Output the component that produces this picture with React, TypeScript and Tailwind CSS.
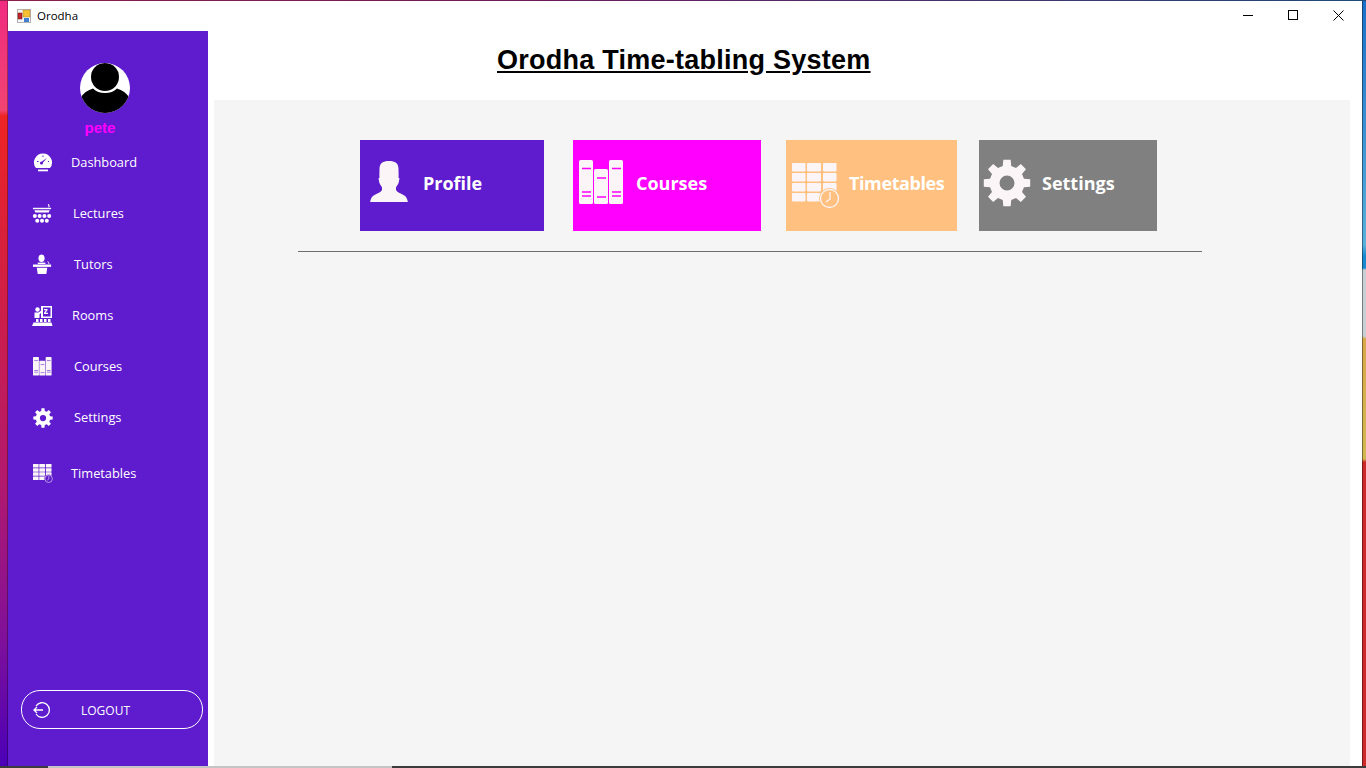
import React from "react";

const WHITE = "#fbf5f7";
const PURPLE = "#5f1bce";

// 8 tooth gear outline, same path for the small and the big one
const gearPath = (() => {
  const pts: string[] = [];
  for (let i = 0; i < 8; i++) {
    const a = (i * Math.PI) / 4 - Math.PI / 2;
    const at = (r: number, d: number) => {
      const t = a + (d * Math.PI) / 180;
      return `${(24 + r * Math.cos(t)).toFixed(2)} ${(24 + r * Math.sin(t)).toFixed(2)}`;
    };
    pts.push(at(17.5, -14), at(23.5, -9), at(23.5, 9), at(17.5, 14));
  }
  return `M${pts.join("L")}zM24 16.5a7.5 7.5 0 1 0 0 15a7.5 7.5 0 0 0 0-15z`;
})();

// --- SVG Icons ---
const DashboardIcon = () => (
  <svg width="20" height="20" viewBox="0 0 20 20" fill="#fff">
    <path d="M10 0.5a9 9 0 0 0-7 14.6h14A9 9 0 0 0 10 0.5z" />
    <path d="M5 16.5h10v1.8H5z" />
    <path d="M14 5 9.5 8 7.5 10.500l2.600-1z" fill={PURPLE} />
    <circle cx="8.5" cy="10" r="1.6" fill={PURPLE} />
    <path d="M4 8.500h1.500M10 2.500V4M15 8.500h1" stroke={PURPLE} strokeWidth="1" />
  </svg>
);

const LecturesIcon = () => (
  <svg width="22" height="21" viewBox="0 0 22 21" fill="#fff">
    <path d="M1 4.500h19v1.500H1z" />
    <path d="M2.500 7h16l-1 2.500h-14z" />
    <path d="M17 4c.5-1 .2-2-.5-3l1-.5c1 1.200 1.200 2.500.6 3.500z" />
    <circle cx="3" cy="13" r="2.100" /><circle cx="8" cy="13" r="2.100" /><circle cx="13" cy="13" r="2.100" /><circle cx="18" cy="13" r="2.100" />
    <circle cx="5.500" cy="18" r="2.100" /><circle cx="10.500" cy="18" r="2.100" /><circle cx="15.500" cy="18" r="2.100" />
  </svg>
);

const TutorsIcon = () => (
  <svg width="22" height="21" viewBox="0 0 22 21" fill="#fff">
    <ellipse cx="10" cy="4" rx="3.200" ry="4" />
    <path d="M6 8.500h8v1.500H6z" />
    <path d="M1 10.500h19V13H1z" />
    <path d="M5 14h11l-1 6.500H6z" />
    <path d="M16 7l1 .3 1.500 2.700h-1z" />
  </svg>
);

const RoomsIcon = () => (
  <svg width="21" height="20" viewBox="0 0 21 20">
    <path d="M9 0h11v12H9z" fill="#fff" />
    <path d="M11 1.500h7.500v9H11z" fill={PURPLE} />
    <path d="M12 3h3.500v1.200l-2 2.500h2.500v1.300h-4V6.700l2-2.400H12z" fill="#fff" />
    <circle cx="5.500" cy="3.500" r="2.200" fill="#fff" />
    <path d="M2.500 6.500h4l3-2 .8 1L7.500 8.500V12h-5z" fill="#fff" />
    <path d="M4 13h2.500v3H4zM8 13h2.500v3H8zM12 13h2.500v3H12zM16 13h2.500v3H16zM1.500 16.500h18l1 3.500H0z" fill="#fff" />
  </svg>
);

const BooksIcon = ({ size, bg }: { size: number; bg: string }) => (
  <svg width={size} height={size} viewBox="0 0 45 45">
    <rect x="0" y="0" width="14" height="44" rx="1.500" fill={WHITE} />
    <rect x="15" y="9" width="14" height="35" rx="1.500" fill={WHITE} />
    <rect x="30" y="0" width="14" height="44" rx="1.500" fill={WHITE} />
    <path d="M3 8.500h9M3 32h9M3 36h9M18 18h9M18 37h9M33 8.500h9M33 32h9M33 36h9" stroke={bg} strokeWidth="1.300" />
  </svg>
);

const TableIcon = ({ size, bg }: { size: number; bg: string }) => (
  <svg width={size} height={size} viewBox="0 0 48 48">
    {[0, 10, 20, 30].map((y) =>
      [
        [0, 13.5],
        [15, 14],
        [31, 13.5],
      ].map(([x, w]) => <rect key={`${x}-${y}`} x={x} y={y} width={w} height="8.400" rx="0.800" fill={WHITE} />),
    )}
    <circle cx="37.500" cy="35.500" r="10.500" fill={bg} />
    <circle cx="37.500" cy="35.500" r="9" fill="none" stroke={WHITE} strokeWidth="1.300" />
    <path d="M38 29v7l-4 3" fill="none" stroke={WHITE} strokeWidth="1.300" />
  </svg>
);

const GearIcon = ({ size, fill = WHITE }: { size: number; fill?: string }) => (
  <svg width={size} height={size} viewBox="0 0 48 48">
    <path fill={fill} fillRule="evenodd" d={gearPath} />
  </svg>
);

const ProfileIcon = () => (
  <svg width="38" height="41" viewBox="0 0 38 41" fill={WHITE}>
    <path d="M19 0c6 0 9.500 2 9.500 8 0 3 .3 6 0 8.500l1 1-.8 4c-.7 2-2 3.500-2.700 5v2.500c1 2 4.500 3.500 7.500 5 2.500 1.200 3.800 3.500 4.500 7.500H0c.7-4 2-6.300 4.500-7.500 3-1.500 6.500-3 7.500-5V26.500c-.7-1.500-2-3-2.700-5l-.8-4 1-1c-.3-2.500 0-5.500 0-8.500C9.500 2 13 0 19 0z" />
  </svg>
);

const LogoutIcon = () => (
  <svg width="18" height="18" viewBox="0 0 18 18" fill="none" stroke="#fff" strokeWidth="1.300">
    <path d="M3 5a7.300 7.300 0 1 1 0 8" />
    <path d="M1 9h9M4 6 1 9l3 3" />
  </svg>
);

const AppIcon = () => (
  <svg width="14" height="14" viewBox="0 0 14 14">
    <rect x="0.500" y="0.500" width="13" height="13" fill="#f4f4f4" stroke="#b4b4b4" />
    <rect x="6" y="1" width="7" height="7" fill="#f5c033" stroke="#b08a20" strokeWidth="0.500" />
    <rect x="1" y="4" width="4" height="6" fill="#c0272d" stroke="#7a1416" strokeWidth="0.500" />
    <rect x="7" y="9" width="5" height="4" fill="#3f7fd0" />
  </svg>
);

const Avatar = () => (
  <svg width="50" height="50" viewBox="0 0 50 50">
    <clipPath id="avatar-clip"><circle cx="25" cy="25" r="25" /></clipPath>
    <g clipPath="url(#avatar-clip)">
      <rect width="50" height="50" fill="#fff" />
      <path d="M0 50V36C3 30 8 27 13 25.500c3 3 7 4.500 12 4.500s9-1.500 12-4.500c5 1.500 10 4.500 13 10.500v14z" fill="#000" />
      <circle cx="25" cy="14" r="14" fill="#000" />
    </g>
  </svg>
);

const navItems = [
  { label: "Dashboard", icon: <DashboardIcon />, ml: "ml-[18px]" },
  { label: "Lectures", icon: <LecturesIcon />, ml: "ml-[20px]" },
  { label: "Tutors", icon: <TutorsIcon />, ml: "ml-[21px]" },
  { label: "Rooms", icon: <RoomsIcon />, ml: "ml-[19px]" },
  { label: "Courses", icon: <BooksIcon size={19} bg={PURPLE} />, ml: "ml-[21px]" },
  { label: "Settings", icon: <GearIcon size={20} fill="#fff" />, ml: "ml-[21px]" },
];

const cards = [
  { label: "Profile", bg: "bg-[#5f1bce]", w: "w-[184px]", ml: "ml-0", gap: "ml-[15px]", iconTop: "mt-[21px]", icon: <ProfileIcon />, pad: "pl-[10px]", track: "" },
  { label: "Courses", bg: "bg-[#ff00ff]", w: "w-[188px]", ml: "ml-[29px]", gap: "ml-[12px]", iconTop: "mt-[20px]", icon: <BooksIcon size={45} bg="#ff00ff" />, pad: "pl-[6px]", track: "" },
  { label: "Timetables", bg: "bg-[#ffc080]", w: "w-[171px]", ml: "ml-[25px]", gap: "ml-[9px]", iconTop: "mt-[23px]", icon: <TableIcon size={48} bg="#ffc080" />, pad: "pl-[6px]", track: "tracking-[-0.4px]" },
  { label: "Settings", bg: "bg-[#808080]", w: "w-[178px]", ml: "ml-[22px]", gap: "ml-[11px]", iconTop: "mt-[19px]", icon: <GearIcon size={48} />, pad: "pl-[4px]", track: "" },
];

export default function App() {
  return (
    <div className="relative w-[1366px] h-[768px] overflow-hidden font-['Open_Sans','Noto_Sans',sans-serif] bg-[linear-gradient(180deg,#f02a80_0%,#f04472_110px,#ee2424_116px,#d8203c_245px,#b01870_490px,#80109a_637px,#4a00b8_768px)]">
      {/* right wallpaper strip */}
      <div className="absolute top-0 right-0 bottom-0 w-[4px] bg-[linear-gradient(180deg,#1a70c8_0px,#58b0dc_245px,#1a8ad0_256px,#1a8ad0_268px,#c8d0d4_270px,#c8d0d4_336px,#d8a848_339px,#d0b850_459px,#cc2a2a_462px,#cc2a2a_768px)]" />
      {/* window shadow edges */}
      <div className="absolute top-0 bottom-0 left-[7px] w-px bg-black/30" />
      <div className="absolute top-0 bottom-0 right-[3px] w-px bg-black/40" />
      {/* top edge */}
      <div className="absolute top-0 left-0 right-0 h-px bg-[linear-gradient(90deg,#8c1f4a_0%,#6a1a5c_40%,#1f4a7a_100%)]" />
      {/* taskbar strip */}
      <div className="absolute bottom-0 left-0 right-0 h-[2px] bg-[#3c3c3c] flex">
        <div className="ml-[48px] w-[344px] bg-[#c4c4c4]" />
      </div>

      <div className="relative flex flex-col ml-[8px] mr-[4px] mt-px h-[765px] bg-white">
        {/* Title bar */}
        <div className="flex items-center h-[30px] shrink-0">
          <div className="ml-[9px] mb-[1px]"><AppIcon /></div>
          <span className="ml-[6px] text-[11.5px] text-black">Orodha</span>
          <div className="ml-auto flex items-center mb-[2px]">
            <div className="w-[10px] h-px bg-black mr-[35px]" />
            <div className="w-[10px] h-[10px] border border-black mr-[35px]" />
            <svg width="11" height="11" viewBox="0 0 11 11" className="mr-[18px]" stroke="#000" strokeWidth="1">
              <path d="M.5.5l10 10M10.500.5l-10 10" />
            </svg>
          </div>
        </div>

        <div className="flex flex-1 min-h-0">
          {/* Sidebar */}
          <aside className="w-[200px] shrink-0 bg-[#5f1bce] flex flex-col">
            <div className="flex flex-col items-center pt-[32px]">
              <div className="ml-[-6px] h-[50px]"><Avatar /></div>
              <span className="ml-[-16px] mt-[7px] h-[16px] leading-[16px] text-[15px] font-bold text-[#ff00ff] font-['Liberation_Sans',sans-serif]">pete</span>
            </div>
            <nav className="flex flex-col mt-[1px]">
              {navItems.map((item) => (
                <div key={item.label} className="flex items-center h-[51px] pl-[24px]">
                  <div className="w-[21px] flex justify-center">{item.icon}</div>
                  <span className={`${item.ml} text-[12.8px] text-white`}>{item.label}</span>
                </div>
              ))}
              <div className="flex items-center h-[51px] mt-[5px] pl-[24px]">
                <div className="w-[21px] flex justify-center"><TableIcon size={20} bg={PURPLE} /></div>
                <span className="ml-[18px] text-[12.8px] text-white">Timetables</span>
              </div>
            </nav>
            <div className="mt-auto mb-[37px] ml-[13px] w-[182px] h-[39px] rounded-[19px] border border-white flex items-center pl-[11px]">
              <LogoutIcon />
              <span className="ml-[30px] mt-[2px] text-[12px] font-medium text-white">LOGOUT</span>
            </div>
          </aside>

          {/* Main area */}
          <main className="flex-1 min-w-0 flex flex-col">
            <div className="h-[69px] shrink-0 pl-[289px] pt-[12px]">
              <h1 className="text-[27px] leading-[34px] font-bold underline text-black font-['Liberation_Sans',sans-serif] tracking-[0.25px]">
                Orodha Time-tabling System
              </h1>
            </div>
            <div className="flex-1 ml-[6px] mr-[12px] bg-[#f5f5f5] pt-[40px]">
              <div className="flex pl-[146px]">
                {cards.map((card) => (
                  <div key={card.label} className={`${card.bg} ${card.w} ${card.ml} ${card.pad} h-[91px] flex items-start`}>
                    <div className={`${card.iconTop} leading-none`}>{card.icon}</div>
                    <span className={`${card.gap} ${card.track} mt-[31px] leading-[24px] text-[18px] font-bold text-white`}>{card.label}</span>
                  </div>
                ))}
              </div>
              <div className="mt-[20px] ml-[84px] w-[904px] h-px bg-[#6e6e6e]" />
            </div>
          </main>
        </div>
      </div>
    </div>
  );
}
